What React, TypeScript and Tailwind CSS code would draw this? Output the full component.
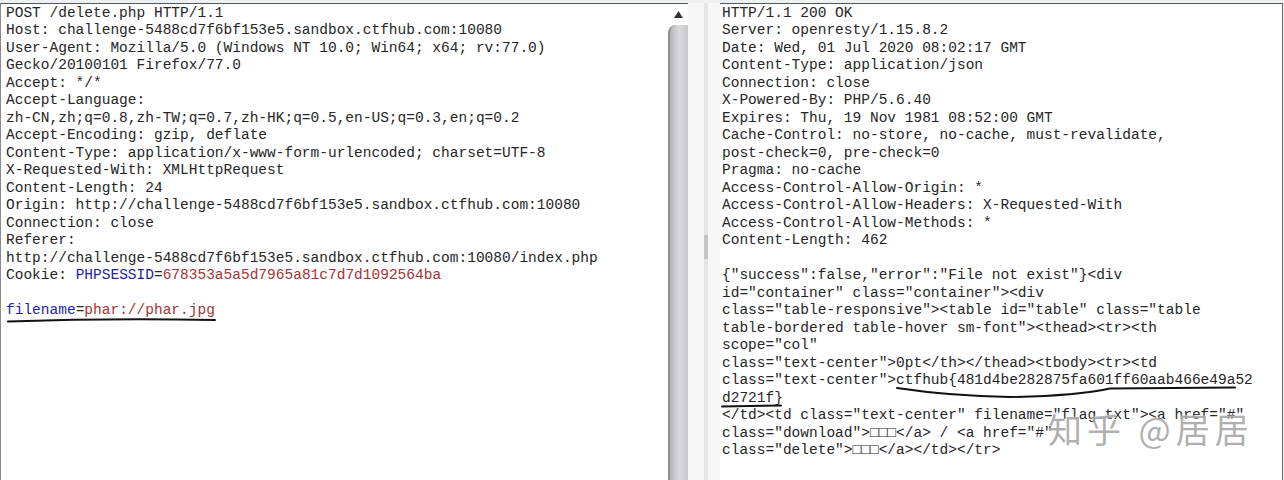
import { FC, ReactNode } from 'react';

const mono = "font-['Liberation_Mono','Courier_New',monospace] text-[14.5px] leading-[17.48px] text-[#262626] whitespace-pre";

const Blue: FC<{ children: ReactNode }> = ({ children }) => <span className="text-[#1e22a6]">{children}</span>;
const Red: FC<{ children: ReactNode }> = ({ children }) => <span className="text-[#a83232]">{children}</span>;

const requestLines: ReactNode[] = [
  'POST /delete.php HTTP/1.1',
  'Host: challenge-5488cd7f6bf153e5.sandbox.ctfhub.com:10080',
  'User-Agent: Mozilla/5.0 (Windows NT 10.0; Win64; x64; rv:77.0)',
  'Gecko/20100101 Firefox/77.0',
  'Accept: */*',
  'Accept-Language:',
  'zh-CN,zh;q=0.8,zh-TW;q=0.7,zh-HK;q=0.5,en-US;q=0.3,en;q=0.2',
  'Accept-Encoding: gzip, deflate',
  'Content-Type: application/x-www-form-urlencoded; charset=UTF-8',
  'X-Requested-With: XMLHttpRequest',
  'Content-Length: 24',
  'Origin: http://challenge-5488cd7f6bf153e5.sandbox.ctfhub.com:10080',
  'Connection: close',
  'Referer:',
  'http://challenge-5488cd7f6bf153e5.sandbox.ctfhub.com:10080/index.php',
  <>Cookie: <Blue>PHPSESSID</Blue>=<Red>678353a5a5d7965a81c7d7d1092564ba</Red></>,
  ' ',
  <><Blue>filename</Blue>=<Red>phar://phar.jpg</Red></>,
];

const responseLines: string[] = [
  'HTTP/1.1 200 OK',
  'Server: openresty/1.15.8.2',
  'Date: Wed, 01 Jul 2020 08:02:17 GMT',
  'Content-Type: application/json',
  'Connection: close',
  'X-Powered-By: PHP/5.6.40',
  'Expires: Thu, 19 Nov 1981 08:52:00 GMT',
  'Cache-Control: no-store, no-cache, must-revalidate,',
  'post-check=0, pre-check=0',
  'Pragma: no-cache',
  'Access-Control-Allow-Origin: *',
  'Access-Control-Allow-Headers: X-Requested-With',
  'Access-Control-Allow-Methods: *',
  'Content-Length: 462',
  ' ',
  '{"success":false,"error":"File not exist"}<div',
  'id="container" class="container"><div',
  'class="table-responsive"><table id="table" class="table',
  'table-bordered table-hover sm-font"><thead><tr><th',
  'scope="col"',
  'class="text-center">0pt</th></thead><tbody><tr><td',
  'class="text-center">ctfhub{481d4be282875fa601ff60aab466e49a52',
  'd2721f}',
  '</td><td class="text-center" filename="flag.txt"><a href="#"',
  'class="download">\u25a1\u25a1\u25a1</a> / <a href="#"',
  'class="delete">\u25a1\u25a1\u25a1</a></td></tr>',
];

const Scrollbar = () => (
  <div className="flex w-[20px] flex-col bg-white">
    <div className="flex h-[21px] items-center justify-center">
      <svg width="9" height="7" viewBox="0 0 9 7"><path d="M4.5 0 L9 7 L0 7 Z" fill="#333" /></svg>
    </div>
    <div className="flex-1 rounded-tl-[8px] border-l-2 border-[#8c8c8c] bg-gradient-to-r from-[#b4b4b8] via-[#dadade] to-[#c6c6cc]" />
  </div>
);

export default function App() {
  return (
    <div className="relative flex h-[480px] w-[1284px] overflow-hidden bg-[#eef0f2] pt-[3px]">
      <div className="flex w-[688px] border-t border-l border-t-[#505862] border-l-[#8a8a8a] bg-white">
        <div className={`${mono} flex-1 pl-[5px] pt-[1px]`}>
          {requestLines.map((l, i) => (
            <div key={i}>{l}</div>
          ))}
        </div>
        <Scrollbar />
      </div>

      <div className="flex w-[32px] justify-center bg-[#f7f7f7] pl-[3px]">
        <div className="flex w-[4px] flex-col bg-[#e6e6e6]">
          <div className="h-[232px]" />
          <div className="h-[24px] bg-[#c4c4c4]" />
        </div>
      </div>

      <div className="w-[563px] border-t border-r border-t-[#505862] border-r-[#6a6a6a] bg-white">
        <div className={`${mono} pl-[2px] pt-[1px]`}>
          {responseLines.map((l, i) => (
            <div key={i}>{l}</div>
          ))}
        </div>
      </div>

      {/* hand drawn underlines */}
      <svg className="pointer-events-none absolute left-0 top-0" width="1284" height="480">
        <path d="M8 321.5 Q110 318 215 320" stroke="#111" strokeWidth="2" fill="none" strokeLinecap="round" />
        <path d="M897 388 Q950 396 1010 397 Q1075 396 1110 388.5 L1235 387.5" stroke="#111" strokeWidth="2" fill="none" strokeLinecap="round" />
        <path d="M722 406.5 L781 405.5" stroke="#111" strokeWidth="2" fill="none" strokeLinecap="round" />
      </svg>

      {/* watermark */}
      <div className="pointer-events-none absolute left-[1048px] top-[409px] font-['Noto_Sans_CJK_SC',sans-serif] text-[34px] leading-[40px] tracking-[5px] text-[#8c8c8c]/70 whitespace-pre [text-shadow:0_0_2px_#fff]">
        知乎 @居居
      </div>
    </div>
  );
}
